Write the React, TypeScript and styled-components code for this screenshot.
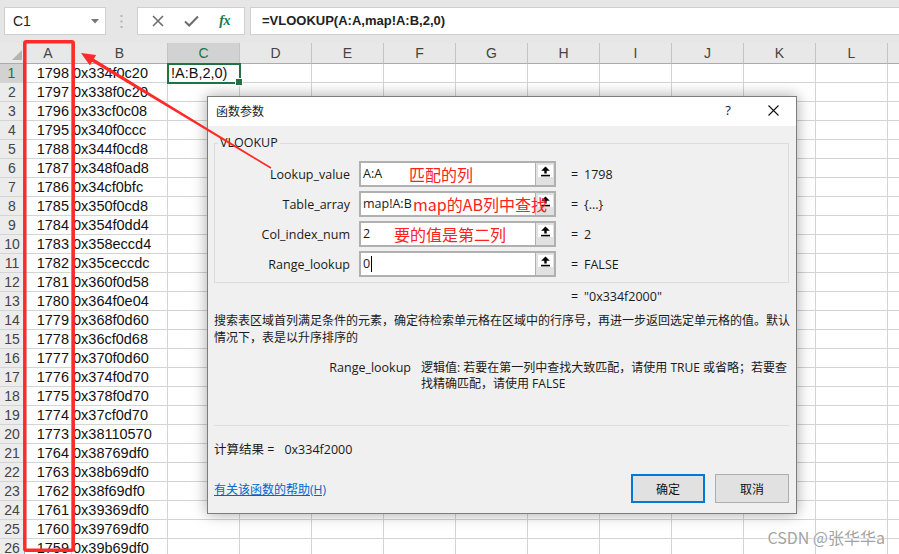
import React from "react";
import styled, { createGlobalStyle } from "styled-components";

const GlobalStyle = createGlobalStyle`
  html, body { margin: 0; padding: 0; background: #fff; overflow: hidden; }
  #root { width: 899px; height: 554px; }
  * { box-sizing: border-box; }
`;

const Page = styled.div`
  position: relative;
  width: 899px;
  height: 554px;
  overflow: hidden;
  background: #fff;
  font-family: "Liberation Sans", Arial, sans-serif;
`;

/* ---------- formula bar ---------- */
const TopBar = styled.div`
  display: flex;
  align-items: flex-start;
  height: 43px;
  padding-top: 7px;
  background: #e6e6e6;
`;

const NameBox = styled.div`
  margin-left: 4px;
  width: 102px;
  height: 28px;
  background: #fff;
  border: 1px solid #cfcfcf;
  display: flex;
  align-items: center;
  justify-content: space-between;
  padding: 0 6px 0 8px;
  font-size: 14px;
  color: #222;
`;

const Grip = styled.div`
  width: 31px;
  height: 28px;
  display: flex;
  align-items: center;
  justify-content: center;
`;

const FxBox = styled.div`
  width: 108px;
  height: 28px;
  background: #fff;
  border: 1px solid #cfcfcf;
  display: flex;
  align-items: center;
  justify-content: space-around;
  padding: 0 4px;
`;

const FxText = styled.span`
  font-family: "Liberation Serif", serif;
  font-style: italic;
  font-weight: bold;
  font-size: 14px;
  color: #217346;
  letter-spacing: -0.5px;
`;

const FormulaInput = styled.div`
  margin-left: 5px;
  flex: 1;
  height: 28px;
  background: #fff;
  border: 1px solid #cfcfcf;
  border-right: none;
  padding-left: 11px;
  font-weight: bold;
  font-size: 13px;
  line-height: 26px;
  color: #222;
  white-space: nowrap;
`;

/* ---------- sheet ---------- */
const Sheet = styled.div`
  display: grid;
  grid-template-columns: 25px 47px 96px repeat(11, 72px);
  grid-template-rows: 21px;
  grid-auto-rows: 19px;
  height: 511px;
  overflow: hidden;
`;

const Corner = styled.div`
  background: #e8e8e8;
  border-right: 1px solid #ababab;
  border-bottom: 1px solid #ababab;
  display: flex;
  align-items: flex-end;
  justify-content: flex-end;
  padding: 0 2px 3px 0;
`;

const ColHead = styled.div<{ $sel?: boolean }>`
  background: ${(p) => (p.$sel ? "#d2d2d2" : "#e8e8e8")};
  color: ${(p) => (p.$sel ? "#217346" : "#444")};
  border-bottom: 1px solid #ababab;
  border-right: 1px solid #c4c4c4;
  display: flex;
  align-items: flex-end;
  justify-content: center;
  font-size: 14px;
  line-height: 19px;
`;

const RowHead = styled.div<{ $sel?: boolean }>`
  background: ${(p) => (p.$sel ? "#d2d2d2" : "#ececec")};
  color: ${(p) => (p.$sel ? "#217346" : "#444")};
  border-bottom: 1px solid #d4d4d4;
  border-right: ${(p) => (p.$sel ? "2px solid #217346" : "1px solid #ababab")};
  text-align: center;
  font-size: 14px;
  line-height: 19px;
`;

const Cell = styled.div<{ $align?: "left" | "right"; $active?: boolean }>`
  position: relative;
  border-right: 1px solid #d4d4d4;
  border-bottom: 1px solid #d4d4d4;
  font-size: 14.5px;
  line-height: 19px;
  color: #111;
  white-space: nowrap;
  text-align: ${(p) => p.$align || "left"};
  padding: ${(p) => (p.$align === "right" ? "0 2px 0 0" : "0 0 0 1px")};
  ${(p) =>
    p.$active &&
    `
    outline: 2px solid #217346;
    outline-offset: -1px;
    z-index: 1;
    padding-left: 3px;
    &::after {
      content: "";
      position: absolute;
      right: -4px;
      bottom: -4px;
      width: 6px;
      height: 6px;
      background: #217346;
      border: 1px solid #fff;
    }
  `}
`;

/* ---------- dialog ---------- */
const Dialog = styled.div`
  position: absolute;
  left: 207px;
  top: 96px;
  width: 590px;
  height: 418px;
  background: #f0f0f0;
  border: 1px solid #7d7d7d;
  box-shadow: 0 0 14px rgba(0, 0, 0, 0.35);
  display: flex;
  flex-direction: column;
  font-family: "Open Sans", "Noto Sans CJK SC", sans-serif;
  color: #1a1a1a;
  z-index: 5;
`;

const TitleBar = styled.div`
  height: 29px;
  background: #fff;
  display: flex;
  align-items: center;
  padding: 0 0 3px 8px;
  font-family: "Noto Sans CJK SC", sans-serif;
  font-size: 12px;
`;

const TitleText = styled.span`
  flex: 1;
`;

const TitleBtn = styled.span<{ $w: number }>`
  width: ${(p) => p.$w}px;
  display: flex;
  align-items: center;
  justify-content: center;
  font-size: 13px;
  font-family: "Open Sans", sans-serif;
`;

const Body = styled.div`
  flex: 1;
  display: flex;
  flex-direction: column;
  padding: 0 7px 10px 6px;
`;

const Group = styled.fieldset`
  margin: 9px 0 0 0;
  padding: 10px 0 5px 0;
  border: 1px solid #dcdcdc;
  display: flex;
  flex-direction: column;
  gap: 4px;
  min-width: 0;
`;

const Legend = styled.legend`
  margin-left: 3px;
  padding: 0 2px;
  font-size: 12.5px;
  line-height: 16px;
`;

const ArgRow = styled.div`
  display: flex;
  align-items: center;
  height: 26px;
`;

const ArgLabel = styled.span`
  width: 135px;
  text-align: right;
  font-size: 12.5px;
  margin-right: 9px;
`;

const ArgInput = styled.div`
  position: relative;
  width: 197px;
  height: 26px;
  background: #fff;
  border: 2px solid #b0b0b0;
  display: flex;
`;

const ArgText = styled.span`
  flex: 1;
  padding-left: 2px;
  font-size: 12.5px;
  line-height: 22px;
  display: flex;
  align-items: center;
`;

const Caret = styled.span`
  display: inline-block;
  width: 1px;
  height: 16px;
  background: #000;
  margin-left: 1px;
`;

const RefButton = styled.span`
  width: 19px;
  background: #e1e1e1;
  border-left: 1px solid #b0b0b0;
  padding: 2px 1px 0 2px;
`;

const IconBox = styled.span`
  display: flex;
  background: #fff;
  width: 15px;
  height: 12px;
  align-items: center;
  justify-content: center;
`;

const Note = styled.span<{ $left: number }>`
  position: absolute;
  left: ${(p) => p.$left}px;
  top: 50%;
  transform: translateY(-52%);
  color: #ff2020;
  font-size: 16px;
  font-family: "Noto Sans CJK SC", sans-serif;
  white-space: nowrap;
  line-height: 1;
  pointer-events: none;
  z-index: 2;
`;

const Eq = styled.span<{ $flush?: boolean }>`
  margin-left: ${(p) => (p.$flush ? 0 : 15)}px;
  width: 13px;
  font-size: 12.5px;
`;

const EqValue = styled.span`
  font-size: 12.5px;
`;

const ResultRow = styled.div`
  display: flex;
  height: 16px;
  line-height: 16px;
  margin-top: 6px;
  padding-left: 357px;
`;

const Desc = styled.div`
  margin-top: 6px;
  font-size: 12px;
  line-height: 17px;
  white-space: nowrap;
  font-family: "Noto Sans CJK SC", sans-serif;
`;

const ParamHelp = styled.div`
  margin-top: 15px;
  display: flex;
  font-size: 12px;
  line-height: 16px;
`;

const ParamName = styled.span`
  width: 197px;
  text-align: right;
  font-size: 12.5px;
  margin-right: 10px;
`;

const ParamText = styled.span`
  white-space: nowrap;
  font-family: "Open Sans", "Noto Sans CJK SC", sans-serif;
`;

const Separator = styled.div`
  margin-top: 33px;
  height: 1px;
  background: #dcdcdc;
`;

const CalcRow = styled.div`
  margin-top: 16px;
  height: 16px;
  line-height: 16px;
  font-size: 12.5px;
  display: flex;
  gap: 4px;
`;

const CalcValue = styled.span`
  margin-left: 6px;
`;

const Footer = styled.div`
  margin-top: 16px;
  display: flex;
  align-items: center;
  height: 29px;
`;

const HelpLink = styled.a`
  flex: 1;
  color: #0066cc;
  text-decoration: underline;
  font-size: 12px;
  font-family: "Open Sans", "Noto Sans CJK SC", sans-serif;
`;

const DlgButton = styled.button<{ $primary?: boolean }>`
  width: 74px;
  height: 29px;
  margin-left: 10px;
  background: #e1e1e1;
  border: ${(p) => (p.$primary ? "2px solid #0078d7" : "1px solid #adadad")};
  font-family: "Noto Sans CJK SC", sans-serif;
  font-size: 12px;
  color: #111;
  padding: 0;
`;

/* ---------- overlays ---------- */
const Overlay = styled.svg`
  position: absolute;
  left: 0;
  top: 0;
  pointer-events: none;
  z-index: 10;
`;

const Watermark = styled.div`
  position: absolute;
  right: 14px;
  bottom: 7px;
  font-family: "Noto Sans CJK SC", sans-serif;
  font-size: 16px;
  line-height: 20px;
  color: #a3a3a3;
  text-shadow: 0 0 2px #fff, 0 0 2px #fff;
  z-index: 11;
`;

const aVals = [
  1798, 1797, 1796, 1795, 1788, 1787, 1786, 1785, 1784, 1783, 1782, 1781, 1780,
  1779, 1778, 1777, 1776, 1775, 1774, 1773, 1764, 1763, 1762, 1761, 1760, 1759,
];
const bVals = [
  "0x334f0c20", "0x338f0c20", "0x33cf0c08", "0x340f0ccc", "0x344f0cd8",
  "0x348f0ad8", "0x34cf0bfc", "0x350f0cd8", "0x354f0dd4", "0x358eccd4",
  "0x35ceccdc", "0x360f0d58", "0x364f0e04", "0x368f0d60", "0x36cf0d68",
  "0x370f0d60", "0x374f0d70", "0x378f0d70", "0x37cf0d70", "0x38110570",
  "0x38769df0", "0x38b69df0", "0x38f69df0", "0x39369df0", "0x39769df0",
  "0x39b69df0",
];
const letters = ["A", "B", "C", "D", "E", "F", "G", "H", "I", "J", "K", "L", "M"];

const UploadIcon = () => (
  <svg width="11" height="11" viewBox="0 0 11 11">
    <path d="M5.5 0.5 L1.2 4.8 H4.3 V7.6 H6.7 V4.8 H9.8 Z" fill="#000" />
    <rect x="1" y="8.8" width="9" height="1.6" fill="#000" />
  </svg>
);

const args = [
  { label: "Lookup_value", value: "A:A", note: "匹配的列", noteLeft: 48, result: "1798" },
  { label: "Table_array", value: "map!A:B", note: "map的AB列中查找", noteLeft: 52, result: "{...}" },
  { label: "Col_index_num", value: "2", note: "要的值是第二列", noteLeft: 33, result: "2" },
  { label: "Range_lookup", value: "0", caret: true, result: "FALSE" },
];

export default function App() {
  return (
    <Page>
      <GlobalStyle />
      <TopBar>
        <NameBox>
          <span>C1</span>
          <svg width="8" height="5" viewBox="0 0 8 5">
            <path d="M0 0 H8 L4 4.5 Z" fill="#777" />
          </svg>
        </NameBox>
        <Grip>
          <svg width="3" height="13" viewBox="0 0 3 13">
            <rect x="0.5" y="0" width="2" height="2" fill="#b5b5b5" />
            <rect x="0.5" y="5.5" width="2" height="2" fill="#b5b5b5" />
            <rect x="0.5" y="11" width="2" height="2" fill="#b5b5b5" />
          </svg>
        </Grip>
        <FxBox>
          <svg width="12" height="12" viewBox="0 0 12 12">
            <path d="M1 1 L11 11 M11 1 L1 11" stroke="#6e6e6e" strokeWidth="1.6" />
          </svg>
          <svg width="15" height="12" viewBox="0 0 15 12">
            <path d="M1 6.5 L5.2 10.5 L14 1.5" stroke="#6e6e6e" strokeWidth="2" fill="none" />
          </svg>
          <FxText>fx</FxText>
        </FxBox>
        <FormulaInput>=VLOOKUP(A:A,map!A:B,2,0)</FormulaInput>
      </TopBar>

      <Sheet>
        <Corner>
          <svg width="10" height="10" viewBox="0 0 10 10">
            <path d="M10 0 V10 H0 Z" fill="#b4b4b4" />
          </svg>
        </Corner>
        {letters.map((l) => (
          <ColHead key={l} $sel={l === "C"}>
            {l}
          </ColHead>
        ))}
        {aVals.map((a, i) => (
          <React.Fragment key={i}>
            <RowHead $sel={i === 0}>{i + 1}</RowHead>
            <Cell $align="right">{a}</Cell>
            <Cell>{bVals[i]}</Cell>
            {letters.slice(2).map((l) => (
              <Cell key={l} $active={i === 0 && l === "C"}>
                {i === 0 && l === "C" ? "!A:B,2,0)" : ""}
              </Cell>
            ))}
          </React.Fragment>
        ))}
      </Sheet>

      <Dialog>
        <TitleBar>
          <TitleText>函数参数</TitleText>
          <TitleBtn $w={44}>?</TitleBtn>
          <TitleBtn $w={46}>
            <svg width="11" height="11" viewBox="0 0 11 11">
              <path d="M0.5 0.5 L10.5 10.5 M10.5 0.5 L0.5 10.5" stroke="#111" strokeWidth="1.1" />
            </svg>
          </TitleBtn>
        </TitleBar>
        <Body>
          <Group>
            <Legend>VLOOKUP</Legend>
            {args.map((a) => (
              <ArgRow key={a.label}>
                <ArgLabel>{a.label}</ArgLabel>
                <ArgInput>
                  <ArgText>
                    {a.value}
                    {a.caret && <Caret />}
                  </ArgText>
                  {a.note && <Note $left={a.noteLeft!}>{a.note}</Note>}
                  <RefButton>
                    <IconBox>
                      <UploadIcon />
                    </IconBox>
                  </RefButton>
                </ArgInput>
                <Eq>=</Eq>
                <EqValue>{a.result}</EqValue>
              </ArgRow>
            ))}
          </Group>
          <ResultRow>
            <Eq $flush>=</Eq>
            <EqValue>"0x334f2000"</EqValue>
          </ResultRow>
          <Desc>
            搜索表区域首列满足条件的元素，确定待检索单元格在区域中的行序号，再进一步返回选定单元格的值。默认
            <br />
            情况下，表是以升序排序的
          </Desc>
          <ParamHelp>
            <ParamName>Range_lookup</ParamName>
            <ParamText>
              逻辑值: 若要在第一列中查找大致匹配，请使用 TRUE 或省略；若要查
              <br />
              找精确匹配，请使用 FALSE
            </ParamText>
          </ParamHelp>
          <Separator />
          <CalcRow>
            <span>计算结果 =</span>
            <CalcValue>0x334f2000</CalcValue>
          </CalcRow>
          <Footer>
            <HelpLink href="#">有关该函数的帮助(H)</HelpLink>
            <DlgButton $primary>确定</DlgButton>
            <DlgButton>取消</DlgButton>
          </Footer>
        </Body>
      </Dialog>

      <Overlay width="899" height="554" viewBox="0 0 899 554">
        <rect x="24.8" y="41.8" width="48.4" height="508.4" rx="1.5" fill="none" stroke="#ff2a2a" strokeWidth="3.5" />
        <polygon
          points="271.41,167.32 93.91,58.71 96.09,55.12 81,53 89.87,65.38 92.05,61.79 270.59,168.68"
          fill="#ff2a2a"
        />
      </Overlay>
      <Watermark>CSDN @张华华a</Watermark>
    </Page>
  );
}
